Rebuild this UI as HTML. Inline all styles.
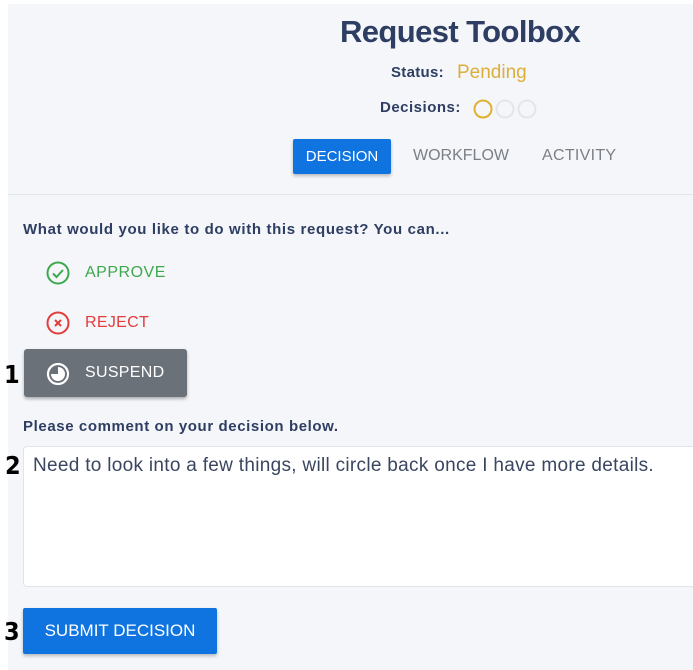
<!DOCTYPE html>
<html><head><style>
body{margin:0;width:693px;height:670px;background:#fff;position:relative;overflow:hidden;font-family:"Liberation Sans",sans-serif;}
.main{position:absolute;left:8px;top:4px;right:0;bottom:0;background:#f4f6fa;}
.a{position:absolute;white-space:nowrap;}
.navy{color:#2e3d62;}
.num{font-family:"DejaVu Sans Condensed","DejaVu Sans",sans-serif;font-weight:900;font-size:25px;color:#000;}
</style></head><body>
<div class="main"></div>
<div class="a navy" style="left:340px;top:14px;font-size:31px;font-weight:bold;letter-spacing:-0.6px">Request Toolbox</div>
<div class="a navy" style="left:391px;top:64px;font-size:15px;font-weight:bold;letter-spacing:0.3px">Status:</div>
<div class="a" style="left:457px;top:62px;font-size:19px;color:#dcae3a">Pending</div>
<div class="a navy" style="left:380px;top:99px;font-size:15px;font-weight:bold;letter-spacing:0.5px">Decisions:</div>
<svg class="a" style="left:472px;top:98px" width="70" height="22">
<circle cx="11" cy="11" r="8.5" fill="none" stroke="#e0b030" stroke-width="2"/>
<circle cx="33" cy="11" r="8.5" fill="none" stroke="#e2e5ea" stroke-width="2"/>
<circle cx="55" cy="11" r="8.5" fill="none" stroke="#e2e5ea" stroke-width="2"/>
</svg>
<div class="a" style="left:293px;top:139px;width:98px;height:35px;background:#0f74e0;border-radius:2px;box-shadow:0 2px 3px rgba(0,0,0,.25);color:#fff;font-size:15px;line-height:35px;text-align:center">DECISION</div>
<div class="a" style="left:413px;top:147px;font-size:16px;color:#7b7f86">WORKFLOW</div>
<div class="a" style="left:542px;top:147px;font-size:16px;color:#7b7f86;letter-spacing:0.3px">ACTIVITY</div>
<div class="a" style="left:8px;top:194px;width:685px;height:1px;background:#e1e4e9"></div>
<div class="a navy" style="left:23px;top:221px;font-size:15px;font-weight:bold;letter-spacing:0.65px">What would you like to do with this request? You can...</div>
<svg class="a" style="left:46px;top:261px" width="24" height="24"><circle cx="12" cy="12" r="10.5" fill="none" stroke="#3ea84f" stroke-width="2"/><path d="M7 12.5l3.5 3.5 6.5-7" fill="none" stroke="#3ea84f" stroke-width="2"/></svg>
<div class="a" style="left:85px;top:264px;font-size:16px;color:#3ea84f;letter-spacing:0.5px">APPROVE</div>
<svg class="a" style="left:46px;top:311px" width="24" height="24"><circle cx="12" cy="12" r="10.5" fill="none" stroke="#e23c3c" stroke-width="2"/><path d="M9 9l6 6M15 9l-6 6" fill="none" stroke="#e23c3c" stroke-width="2"/></svg>
<div class="a" style="left:85px;top:314px;font-size:16px;color:#e23c3c;letter-spacing:0.3px">REJECT</div>
<div class="a" style="left:24px;top:349px;width:163px;height:48px;background:#6b7179;border-radius:3px;box-shadow:0 2px 3px rgba(0,0,0,.3)"></div>
<svg class="a" style="left:46px;top:362px" width="24" height="24"><circle cx="12" cy="12" r="10" fill="none" stroke="#fff" stroke-width="2.2"/><path d="M12 5A7 7 0 1 1 5 12L12 12Z" fill="#fff"/></svg>
<div class="a" style="left:85px;top:364px;font-size:16px;color:#fff;letter-spacing:0.3px">SUSPEND</div>
<div class="a num" style="left:4px;top:360px">1</div>
<div class="a navy" style="left:23px;top:418px;font-size:15px;font-weight:bold;letter-spacing:0.6px">Please comment on your decision below.</div>
<div class="a" style="left:23px;top:446px;width:680px;height:139px;background:#fff;border:1px solid #e1e5ea;border-radius:4px"></div>
<div class="a" style="left:33px;top:455px;font-size:19px;color:#3a4660;letter-spacing:0.3px">Need to look into a few things, will circle back once I have more details.</div>
<div class="a num" style="left:5px;top:451px">2</div>
<div class="a" style="left:23px;top:608px;width:194px;height:46px;background:#0f74e0;border-radius:2px;box-shadow:0 2px 3px rgba(0,0,0,.25);color:#fff;font-size:17px;line-height:46px;text-align:center">SUBMIT DECISION</div>
<div class="a num" style="left:4px;top:617px">3</div>
</body></html>
